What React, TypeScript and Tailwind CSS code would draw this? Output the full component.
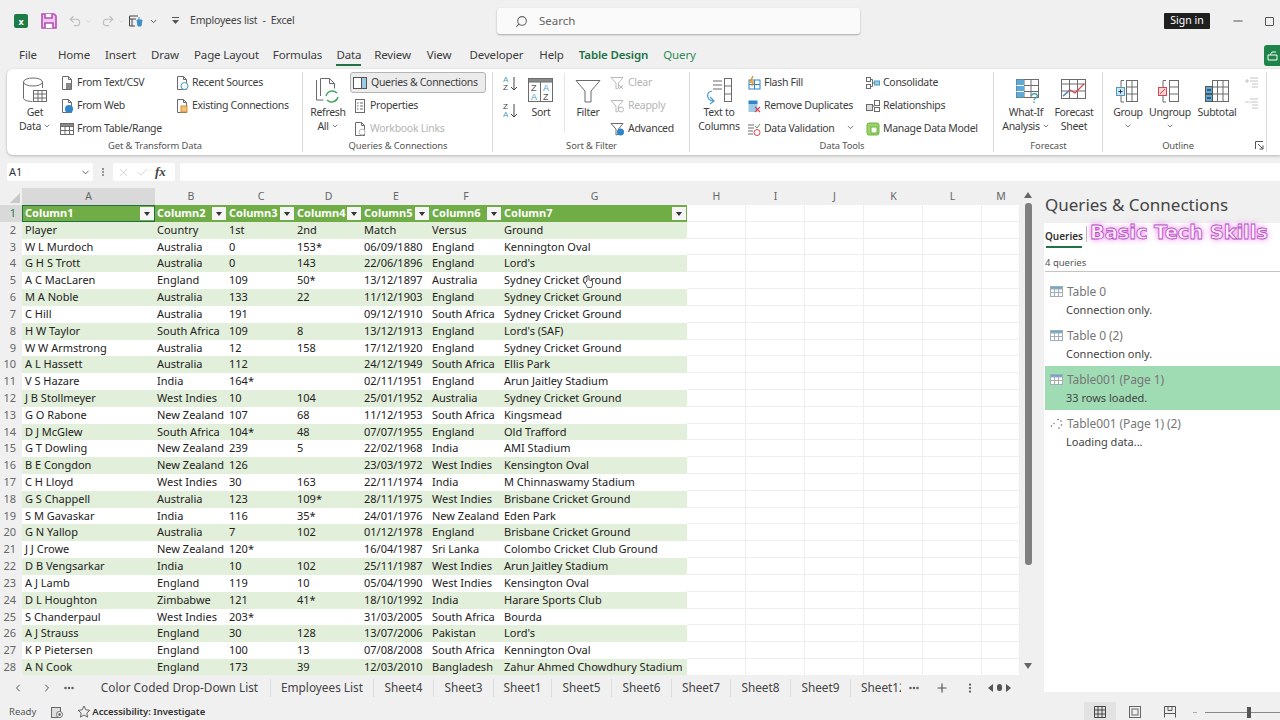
import type { ReactNode } from "react";
import { ChevronDown, ChevronLeft, ChevronRight, Check, MoreHorizontal, MoreVertical, Plus, Search, Undo2, Redo2, X, Minus } from "lucide-react";

const TEAL = "#4a9cc7";
const GR = "#6b6b6b";

const rows = [
  ["Player", "Country", "1st", "2nd", "Match", "Versus", "Ground"],
  ["W L Murdoch", "Australia", "0", "153*", "06/09/1880", "England", "Kennington Oval"],
  ["G H S Trott", "Australia", "0", "143", "22/06/1896", "England", "Lord's"],
  ["A C MacLaren", "England", "109", "50*", "13/12/1897", "Australia", "Sydney Cricket Ground"],
  ["M A Noble", "Australia", "133", "22", "11/12/1903", "England", "Sydney Cricket Ground"],
  ["C Hill", "Australia", "191", "", "09/12/1910", "South Africa", "Sydney Cricket Ground"],
  ["H W Taylor", "South Africa", "109", "8", "13/12/1913", "England", "Lord's (SAF)"],
  ["W W Armstrong", "Australia", "12", "158", "17/12/1920", "England", "Sydney Cricket Ground"],
  ["A L Hassett", "Australia", "112", "", "24/12/1949", "South Africa", "Ellis Park"],
  ["V S Hazare", "India", "164*", "", "02/11/1951", "England", "Arun Jaitley Stadium"],
  ["J B Stollmeyer", "West Indies", "10", "104", "25/01/1952", "Australia", "Sydney Cricket Ground"],
  ["G O Rabone", "New Zealand", "107", "68", "11/12/1953", "South Africa", "Kingsmead"],
  ["D J McGlew", "South Africa", "104*", "48", "07/07/1955", "England", "Old Trafford"],
  ["G T Dowling", "New Zealand", "239", "5", "22/02/1968", "India", "AMI Stadium"],
  ["B E Congdon", "New Zealand", "126", "", "23/03/1972", "West Indies", "Kensington Oval"],
  ["C H Lloyd", "West Indies", "30", "163", "22/11/1974", "India", "M Chinnaswamy Stadium"],
  ["G S Chappell", "Australia", "123", "109*", "28/11/1975", "West Indies", "Brisbane Cricket Ground"],
  ["S M Gavaskar", "India", "116", "35*", "24/01/1976", "New Zealand", "Eden Park"],
  ["G N Yallop", "Australia", "7", "102", "01/12/1978", "England", "Brisbane Cricket Ground"],
  ["J J Crowe", "New Zealand", "120*", "", "16/04/1987", "Sri Lanka", "Colombo Cricket Club Ground"],
  ["D B Vengsarkar", "India", "10", "102", "25/11/1987", "West Indies", "Arun Jaitley Stadium"],
  ["A J Lamb", "England", "119", "10", "05/04/1990", "West Indies", "Kensington Oval"],
  ["D L Houghton", "Zimbabwe", "121", "41*", "18/10/1992", "India", "Harare Sports Club"],
  ["S Chanderpaul", "West Indies", "203*", "", "31/03/2005", "South Africa", "Bourda"],
  ["A J Strauss", "England", "30", "128", "13/07/2006", "Pakistan", "Lord's"],
  ["K P Pietersen", "England", "100", "13", "07/08/2008", "South Africa", "Kennington Oval"],
  ["A N Cook", "England", "173", "39", "12/03/2010", "Bangladesh", "Zahur Ahmed Chowdhury Stadium"],
];

const gridCols = "grid grid-cols-[22px_133px_72px_68px_67px_68px_72px_185px_59px_59px_59px_59px_59px_38px]";
const letters = ["A", "B", "C", "D", "E", "F", "G", "H", "I", "J", "K", "L", "M"];

const Ico = ({ w = 14, h = 14, children }: { w?: number; h?: number; children: ReactNode }) => (
  <svg width={w} height={h} viewBox={`0 0 ${w} ${h}`} fill="none" stroke={GR} strokeWidth="1" className="shrink-0">
    {children}
  </svg>
);

const Doc = ({ children }: { children?: ReactNode }) => (
  <Ico>
    <path d="M2.500 13.500V.5h6l3 3v10z" fill="#fff" />
    <path d="M8.500.5v3h3" />
    {children}
  </Ico>
);

const TableIco = ({ color = GR }: { color?: string }) => (
  <Ico>
    <rect x=".5" y="1.500" width="13" height="11" fill="#fff" stroke={color} />
    <path d="M.5 8.500h13M5 4.500v8M9.500 4.500v8" stroke={color} />
    <rect x=".5" y="1.500" width="13" height="3" fill="#8a8a8a" stroke={color} />
  </Ico>
);

const Small = ({ icon, label, disabled }: { icon: ReactNode; label: string; disabled?: boolean }) => (
  <div className={`flex h-[22.7px] items-center gap-[3px] whitespace-nowrap ${disabled ? "text-[#b5b5b5]" : "text-[#3d3d3d]"}`}>
    {icon}
    <span>{label}</span>
  </div>
);

const Big = ({ icon, lines, w, ml, caret }: { icon: ReactNode; lines: string[]; w: string; ml: string; caret?: boolean }) => (
  <div className={`flex shrink-0 flex-col items-center text-[#3d3d3d] ${w} ${ml}`}>
    <div className="flex h-[34px] items-end justify-center">{icon}</div>
    {lines.map((l, i) => (
      <div key={l} className="flex h-[14px] items-center gap-[2px] whitespace-nowrap leading-[14px]">
        {l}
        {caret && i === lines.length - 1 && <ChevronDown size={8} strokeWidth={2} />}
      </div>
    ))}
  </div>
);

const Group = ({ label, w, children, labelPad }: { label: string; w: string; children: ReactNode; labelPad?: string }) => (
  <div className={`relative flex h-full shrink-0 flex-col ${w}`}>
    <div className="flex h-[68px] pt-[2px]">{children}</div>
    <div className={`mt-[2px] text-center text-[9.4px] leading-[14px] tracking-[-0.1px] text-[#555] ${labelPad ?? ""}`}>{label}</div>
    <div className="absolute right-0 top-[3px] h-[80px] w-px bg-[#dcdcdc]" />
  </div>
);

const Ribbon = () => (
  <div className="ml-[7px] flex h-[86px] rounded-l-[6px] bg-white text-[10.5px] tracking-[-0.3px] shadow-[0_1px_3px_rgba(0,0,0,0.25)]">
    <Group label="Get & Transform Data" w="w-[296px]">
      <Big
        w="w-[36px]"
        ml="ml-[10px]"
        caret
        lines={["Get", "Data"]}
        icon={
          <Ico w={26} h={28}>
            <ellipse cx="11" cy="5" rx="9.500" ry="4" fill="#fff" />
            <path d="M1.500 5v16c0 2 4 3.500 9 3.500M20.500 5v6" />
            <rect x="11.500" y="13.500" width="13" height="11" fill="#fff" />
            <path d="M11.500 17h13M11.500 21h13M16 13.500v11M20 13.500v11" />
          </Ico>
        }
      />
      <div className="ml-[7px] mt-px w-[115px]">
        <Small label="From Text/CSV" icon={<Doc><rect x="6" y="7" width="5" height="6" fill="#8a8a8a" stroke="none" /></Doc>} />
        <Small label="From Web" icon={<Doc><circle cx="9" cy="10" r="4" fill="#2f86c6" stroke="none" /></Doc>} />
        <Small label="From Table/Range" icon={<TableIco />} />
      </div>
      <div className="mt-px w-[110px]">
        <Small label="Recent Sources" icon={<Doc><circle cx="9.500" cy="10" r="3.500" fill="#fff" stroke={TEAL} /></Doc>} />
        <Small label="Existing Connections" icon={<Doc><rect x="6" y="7" width="6" height="6" fill="#f3c27a" stroke="#d48a2a" /></Doc>} />
      </div>
    </Group>
    <Group label="Queries & Connections" w="w-[190px]">
      <Big
        w="w-[40px]"
        ml="ml-[5px]"
        caret
        lines={["Refresh", "All"]}
        icon={
          <Ico w={26} h={28}>
            <path d="M1.500 3v20h7" />
            <path d="M5.500 19V1.500h9l5 5v5" fill="#fff" />
            <path d="M14.500 1.500v5h5" />
            <path d="M11 19a6.500 6.500 0 0 1 11-3M23 20a6.500 6.500 0 0 1-11 3" stroke="#4aa564" strokeWidth="1.400" />
          </Ico>
        }
      />
      <div className="ml-[2px] mt-px w-[136px]">
        <div className="flex h-[21px] items-center gap-[4px] rounded-[3px] border border-[#b4b4b4] bg-[#ececec] pl-[2px] text-[#3d3d3d]">
          <Ico>
            <rect x=".5" y="1.500" width="13" height="11" fill="#fff" stroke="#555" />
            <rect x="8.500" y="1.500" width="5" height="11" fill="#9bcbe6" stroke="#555" />
          </Ico>
          <span className="whitespace-nowrap">Queries & Connections</span>
        </div>
        <div className="ml-[3px] mt-[2px]">
          <Small label="Properties" icon={<Ico><rect x="2.500" y=".5" width="9" height="13" fill="#fff" /><path d="M4 4h1.500M7 4h3M4 7h1.500M7 7h3M4 10h1.500M7 10h3" /></Ico>} />
          <Small label="Workbook Links" disabled icon={<Doc><circle cx="9" cy="10" r="3" fill="#fff" stroke="#bbb" /></Doc>} />
        </div>
      </div>
    </Group>
    <Group label="Sort & Filter" w="w-[197px]">
      <div className="ml-[10px] w-[15px] shrink-0 text-[#3d3d3d]">
        <svg width="16" height="22" viewBox="0 0 16 22" className="mt-[3px]">
          <text x="0" y="8" fontSize="8" fill={TEAL} fontFamily="Liberation Sans">A</text>
          <text x="0" y="16" fontSize="8" fill="#444" fontFamily="Liberation Sans">Z</text>
          <path d="M11 3v13M8 13l3 3 3-3" stroke="#444" fill="none" />
        </svg>
        <svg width="16" height="22" viewBox="0 0 16 22" className="mt-[5px]">
          <text x="0" y="8" fontSize="8" fill="#444" fontFamily="Liberation Sans">Z</text>
          <text x="0" y="16" fontSize="8" fill={TEAL} fontFamily="Liberation Sans">A</text>
          <path d="M11 3v13M8 13l3 3 3-3" stroke="#444" fill="none" />
        </svg>
      </div>
      <Big
        w="w-[30px]"
        ml="ml-[8px]"
        lines={["Sort"]}
        icon={
          <Ico w={26} h={28}>
            <rect x=".5" y="1.500" width="24" height="23" fill="#fff" />
            <rect x=".5" y="1.500" width="24" height="3.500" fill="#8a8a8a" />
            <path d="M12.500 5v19.500" />
            <text x="3" y="14" fontSize="9" fill="#555" stroke="none" fontFamily="Liberation Sans">Z</text>
            <text x="3" y="23" fontSize="9" fill={TEAL} stroke="none" fontFamily="Liberation Sans">A</text>
            <text x="15" y="14" fontSize="9" fill={TEAL} stroke="none" fontFamily="Liberation Sans">A</text>
            <text x="15" y="23" fontSize="9" fill="#555" stroke="none" fontFamily="Liberation Sans">Z</text>
          </Ico>
        }
      />
      <div className="ml-[8px] mt-[2px] h-[60px] w-px shrink-0 bg-[#e4e4e4]" />
      <Big
        w="w-[32px]"
        ml="ml-[7px]"
        lines={["Filter"]}
        icon={
          <Ico w={26} h={28}>
            <path d="M1 3.500h24L16 14v11h-6V14z" fill="#fff" />
          </Ico>
        }
      />
      <div className="ml-[6px] mt-px">
        <Small label="Clear" disabled icon={<Ico w={15}><path d="M1 1.500h12L8.500 7v5l-2.500 1V7z" stroke="#bbb" /><path d="M9 9l4 4M13 9l-4 4" stroke="#bbb" /></Ico>} />
        <Small label="Reapply" disabled icon={<Ico w={15}><path d="M1 1.500h12L8.500 7v5l-2.500 1V7z" stroke="#bbb" /><circle cx="11" cy="10.500" r="2.500" stroke="#bbb" /></Ico>} />
        <Small label="Advanced" icon={<Ico w={15}><path d="M1 1.500h12L8.500 7v5l-2.500 1V7z" /><circle cx="10.500" cy="10" r="3.500" fill="#2f86c6" stroke="none" /></Ico>} />
      </div>
    </Group>
    <Group label="Data Tools" w="w-[304px]">
      <Big
        w="w-[44px]"
        ml="ml-[7px]"
        lines={["Text to", "Columns"]}
        icon={
          <Ico w={30} h={28}>
            <path d="M9 4h9M9 8h9M9 12h9" />
            <rect x="20.500" y="1.500" width="7" height="23" fill="#fff" />
            <path d="M20.500 9h7M20.500 17h7" />
            <path d="M8 14c-6 1-6 9 1 10M6 20l4 4-4 3" stroke={TEAL} strokeWidth="1.200" />
          </Ico>
        }
      />
      <div className="ml-[6px] mt-px w-[119px] shrink-0">
        <Small label="Flash Fill" icon={<Ico><rect x="2" y="4" width="11" height="9" stroke="#2f86c6" fill="#fff" /><path d="M2 8.500h11M7.500 4v9" stroke="#2f86c6" /><path d="M6 0L3 6h3l-1 4" stroke="#e8952c" strokeWidth="1.500" /></Ico>} />
        <Small label="Remove Duplicates" icon={<Ico><rect x="1.500" y="1.500" width="9" height="3.500" fill="#2f86c6" stroke="none" /><rect x="1.500" y="5" width="9" height="8" fill="#9bcbe6" stroke="none" /><path d="M8 8l5 5M13 8l-5 5" stroke="#d9434e" strokeWidth="1.200" /></Ico>} />
        <Small label="Data Validation" icon={<Ico><path d="M1 3h6M1 6h6M1 9h5M1 12h5" /><path d="M8 4l2 2 3-4" stroke="#5a9e5a" /><circle cx="10" cy="10.500" r="3" stroke="#d9434e" /></Ico>} />
      </div>
      <div className="mt-px w-[115px] shrink-0">
        <Small label="Consolidate" icon={<Ico><rect x=".5" y="1.500" width="4" height="4" /><rect x=".5" y="8.500" width="4" height="4" /><path d="M4.500 3.500h2v7h-2M6.500 7h2" /><rect x="8.500" y="5" width="5" height="4" fill="#9bcbe6" stroke={TEAL} /></Ico>} />
        <Small label="Relationships" icon={<Ico><rect x=".5" y="5.500" width="6" height="6" fill="#ddd" /><rect x="8.500" y="1.500" width="5" height="5" /><rect x="8.500" y="8.500" width="5" height="4" /><path d="M6.500 7h2" /></Ico>} />
        <Small label="Manage Data Model" icon={<Ico><rect x="1" y="1" width="12" height="12" rx="2" fill="#9bd46a" stroke="#6cb33f" /><rect x="5" y="5" width="6" height="6" fill="#fff" stroke="#6cb33f" /></Ico>} />
      </div>
      <ChevronDown size={9} strokeWidth={2} className="absolute left-[156px] top-[54px] text-[#444]" />
    </Group>
    <Group label="Forecast" w="w-[109px]">
      <Big
        w="w-[48px]"
        ml="ml-[8px]"
        caret
        lines={["What-If", "Analysis"]}
        icon={
          <Ico w={30} h={28}>
            <rect x="5.500" y="2.500" width="22" height="18" fill="#fff" />
            <path d="M13 2.500v18M20 2.500v18M5.500 8.500h22M5.500 14.500h22" />
            <rect x="5.500" y="2.500" width="7.500" height="18" fill="#5da9d8" stroke="none" />
            <path d="M13 8.500H5.500M13 14.500H5.500" stroke="#fff" />
            <text x="19" y="26" fontSize="15" fill="#3f9ea8" stroke="none" fontFamily="Liberation Sans">?</text>
          </Ico>
        }
      />
      <Big
        w="w-[44px]"
        ml="ml-[2px]"
        lines={["Forecast", "Sheet"]}
        icon={
          <Ico w={26} h={28}>
            <rect x=".5" y="2.500" width="24" height="19" fill="#fff" />
            <path d="M.5 7h24M8.500 2.500v19M16.500 2.500v19M.5 14h24" />
            <path d="M2 19l7-6 5 3 9-9" stroke="#d9434e" strokeWidth="1.200" />
            <path d="M2 19l6-5" stroke={TEAL} strokeWidth="1.400" />
          </Ico>
        }
      />
    </Group>
    <Group label="Outline" w="w-[164px]" labelPad="pr-[14px]">
      <Big
        w="w-[30px]"
        ml="ml-[10px]"
        caret
        lines={["Group", ""]}
        icon={
          <Ico w={24} h={28}>
            <path d="M8 3.500H5V10M5 19v6h3" />
            <rect x="10.500" y="3.500" width="11" height="21" fill="#fff" />
            <path d="M10.500 10h11M10.500 17h11M16 3.500v21" />
            <rect x=".5" y="10.500" width="8" height="8" fill="#cde4f2" stroke={TEAL} />
            <path d="M2.500 14.500h4M4.500 12.500v4" stroke="#333" />
          </Ico>
        }
      />
      <Big
        w="w-[44px]"
        ml="ml-[5px]"
        caret
        lines={["Ungroup", ""]}
        icon={
          <Ico w={24} h={28}>
            <path d="M8 3.500H5V10M5 19v6h3" />
            <rect x="11.500" y="3.500" width="9" height="21" fill="#fff" />
            <path d="M11.500 10h9M11.500 17h9" />
            <rect x=".5" y="10.500" width="8" height="8" fill="#f6d5d8" stroke="#d9434e" />
            <path d="M2 17l5-5" stroke="#d9434e" />
          </Ico>
        }
      />
      <Big
        w="w-[44px]"
        ml="ml-[3px]"
        lines={["Subtotal"]}
        icon={
          <Ico w={26} h={28}>
            <rect x="8.500" y="3.500" width="16" height="21" fill="#fff" />
            <path d="M8.500 10h16M8.500 17h16M13.500 3.500v21M19 3.500v21" />
            <rect x="1.500" y="9.500" width="7" height="7" fill="#5da9d8" stroke="#555" />
            <rect x="1.500" y="17.500" width="7" height="7" fill="#5da9d8" stroke="#555" />
            <path d="M3 13h4M3 21h4" stroke="#111" />
          </Ico>
        }
      />
      <div className="ml-[6px] mt-[4px] flex flex-col gap-[7px]">
        <Ico w={14} h={14}><path d="M5 3h8M5 6h8M7 9h6M7 12h6" stroke="#c4c4c4" /><path d="M0 6h4M2 4v4" stroke="#c4c4c4" /></Ico>
        <Ico w={14} h={14}><path d="M5 3h8M5 6h8M7 9h6M7 12h6" stroke="#c4c4c4" /><path d="M0 6h4" stroke="#c4c4c4" /></Ico>
      </div>
      <svg width="9" height="9" viewBox="0 0 9 9" className="absolute bottom-[5px] left-[152px]" fill="none" stroke="#555">
        <path d="M.5 8V.5H8M3 3l5 5M8 4.500V8H4.500" />
      </svg>
    </Group>
  </div>
);

const tabs = ["File", "Home", "Insert", "Draw", "Page Layout", "Formulas", "Data", "Review", "View", "Developer", "Help", "Table Design", "Query"];
const tabWidths = ["w-[44px]", "w-[48px]", "w-[45px]", "w-[44px]", "w-[79px]", "w-[63px]", "w-[40px]", "w-[47px]", "w-[46px]", "w-[69px]", "w-[41px]", "w-[83px]", "w-[49px]"];
const sheets: [string, string][] = [
  ["Color Coded Drop-Down List", "w-[182px]"],
  ["Employees List", "w-[103px]"],
  ["Sheet4", "w-[60px]"],
  ["Sheet3", "w-[60px]"],
  ["Sheet1", "w-[58px]"],
  ["Sheet5", "w-[60px]"],
  ["Sheet6", "w-[60px]"],
  ["Sheet7", "w-[59px]"],
  ["Sheet8", "w-[60px]"],
  ["Sheet9", "w-[60px]"],
];

const Query = ({ name, sub, selected, loading }: { name: string; sub: string; selected?: boolean; loading?: boolean }) => (
  <div className={`h-[44px] pl-[5px] pt-[4px] ${selected ? "bg-[#9fdcb4]" : ""}`}>
    <div className="flex h-[19px] items-center gap-[4px] text-[12px] tracking-[-0.1px] text-[#777]">
      {loading ? (
        <svg width="13" height="13" viewBox="0 0 13 13" className="shrink-0" fill="#666">
          <circle cx="1.500" cy="9" r=".8" />
          <circle cx="4" cy="6.500" r=".7" />
          <circle cx="8" cy="2.500" r=".8" />
          <circle cx="11" cy="4" r=".8" />
          <circle cx="11.500" cy="8" r=".8" />
          <circle cx="9" cy="11" r=".8" />
        </svg>
      ) : (
        <svg width="13" height="13" viewBox="0 0 13 13" className="shrink-0" fill="none" stroke="#a3adb5">
          <rect x=".5" y="1.500" width="12" height="10" fill="#fff" />
          <rect x=".5" y="1.500" width="12" height="2.500" fill="#6aa9cf" />
          <path d="M4.500 4v7.500M8.500 4v7.500M.5 7.500h12" />
        </svg>
      )}
      <span className="whitespace-nowrap">{name}</span>
    </div>
    <div className="pl-[16px] text-[11px] leading-[18px] text-[#444]">{sub}</div>
  </div>
);

export default function App() {
  return (
    <div className="flex h-[720px] w-[1280px] flex-col overflow-hidden bg-[#f0f0f0] font-['Noto_Sans',sans-serif]">
      {/* Title bar */}
      <div className="flex h-[41px] items-center pt-[1px]">
        <div className="ml-[14px] flex h-[14px] w-[14px] items-center justify-center rounded-[2px] bg-[#1d7c46] text-[9px] font-bold leading-none text-white">x</div>
        <svg width="16" height="16" viewBox="0 0 16 16" className="ml-[13px]" fill="#f2c8f0" stroke="#b24fb4" strokeWidth="1.600">
          <path d="M1 1h12l2 2v12H1z" />
          <path d="M4 1v4h7V1M4 15v-5h8v5" fill="#fff" />
        </svg>
        <Undo2 size={14} className="ml-[11px] text-[#bdbdbd]" />
        <ChevronDown size={7} className="ml-[3px] text-[#c8c8c8]" />
        <Redo2 size={14} className="ml-[9px] text-[#bdbdbd]" />
        <ChevronDown size={7} className="ml-[3px] text-[#c8c8c8]" />
        <svg width="16" height="15" viewBox="0 0 16 15" className="ml-[3px]" fill="none" stroke="#444">
          <path d="M10 2H1.500v10H7M1.500 5H8M4 5v7" />
          <path d="M11 3v7M9 6h5l-1 6H10z" fill="#3b8fc4" stroke="#3b8fc4" />
        </svg>
        <ChevronDown size={9} strokeWidth={2.500} className="ml-[5px] text-[#444]" />
        <svg width="9" height="8" viewBox="0 0 9 8" className="ml-[13px]" fill="#555">
          <path d="M1 0h7v1H1zM1 3h7L4.500 7z" />
        </svg>
        <div className="ml-[10px] w-[307px] text-[10.5px] tracking-[-0.2px] text-[#444]">Employees list&nbsp; -&nbsp; Excel</div>
        <div className="flex h-[26px] w-[363px] items-center rounded-[3px] bg-[#fafafa] pl-[18px] text-[11.5px] text-[#666] shadow-[0_1px_2px_rgba(0,0,0,0.3)]">
          <Search size={13} className="-scale-x-100 text-[#666]" />
          <span className="ml-[11px]">Search</span>
        </div>
        <div className="ml-[304px] flex h-[16px] w-[46px] items-center justify-center rounded-[1px] bg-[#1f1f1f] text-[10.5px] text-white">Sign in</div>
        <Minus size={14} className="ml-[21px] text-[#555]" />
        <div className="ml-[20px] h-[9px] w-[9px] rounded-[1px] border border-[#555]" />
      </div>

      {/* Ribbon tabs */}
      <div className="flex h-[28px] items-center pl-[6px] text-[11.5px] tracking-[-0.15px] text-[#3d3d3d]">
        {tabs.map((t, i) => (
          <div
            key={t}
            className={`relative flex h-full shrink-0 items-center justify-center whitespace-nowrap ${tabWidths[i]} ${t === "Table Design" ? "font-semibold text-[#217346]" : ""} ${t === "Query" ? "text-[#2e8b57]" : ""}`}
          >
            {t}
            {t === "Data" && <div className="absolute bottom-[3px] left-[7px] h-[2px] w-[25px] bg-[#217346]" />}
          </div>
        ))}
        <div className="ml-auto flex h-[21px] w-[16px] items-center justify-center rounded-l-[3px] bg-[#1e8449]">
          <svg width="11" height="11" viewBox="0 0 11 11" fill="none" stroke="#fff"><path d="M1 10V5h9v5zM3 5l2-3h4" /></svg>
        </div>
      </div>

      <Ribbon />

      {/* Formula bar */}
      <div className="mt-[8px] flex h-[18px] items-center text-[11px]">
        <div className="ml-[7px] flex h-full w-[86px] items-center justify-between rounded-[2px] bg-white pl-[2px] pr-[2px] text-[#333]">
          A1
          <ChevronDown size={11} className="text-[#555]" />
        </div>
        <MoreVertical size={10} strokeWidth={3} className="ml-[5px] text-[#777]" />
        <div className="ml-[5px] flex h-full w-[62px] items-center gap-[6px] rounded-[2px] bg-white pl-[4px]">
          <X size={13} strokeWidth={1} className="text-[#b5b5b5]" />
          <Check size={13} strokeWidth={1} className="text-[#b5b5b5]" />
          <span className="font-['Liberation_Serif',serif] text-[13px] font-bold italic text-[#444]">fx</span>
        </div>
        <div className="ml-[5px] h-full flex-1 bg-white" />
      </div>

      {/* Sheet + pane */}
      <div className="mt-[7px] flex h-[512px]">
        <div className="flex w-[1036px] flex-col">
          <div className="flex h-[487px]">
            <div className="relative w-[1020px] overflow-hidden bg-white text-[11px] leading-[16.82px] text-[#222]">
              <div className={`${gridCols} h-[17px] bg-[#f0f0f0] text-center text-[10.5px] text-[#666]`}>
                <div className="relative">
                  <div className="absolute bottom-[2px] right-[2px] h-0 w-0 border-b-[10px] border-l-[10px] border-b-[#c8c8c8] border-l-transparent" />
                </div>
                {letters.map((l, i) => (
                  <div key={l} className={`leading-[16px] ${i === 0 ? "bg-[#d9d9d9]" : ""}`}>{l}</div>
                ))}
              </div>
              <div className={`${gridCols} h-[16.82px] bg-white`}>
                <div className="bg-[#d9d9d9] pr-[6px] text-right text-[#2a7a4b]">1</div>
                {["Column1", "Column2", "Column3", "Column4", "Column5", "Column6", "Column7"].map((c, i) => (
                  <div key={c} className={`relative bg-[#70ad47] font-bold text-white ${i === 0 ? "pl-[3px] outline-[1.5px] -outline-offset-1 outline-[#1e6f41]" : "pl-[2px]"}`}>
                    {c}
                    <div className="absolute right-[1px] top-[2px] flex h-[13px] w-[14px] items-center justify-center bg-[#f5f5f5]">
                      <div className="h-0 w-0 border-x-[3.5px] border-t-[4px] border-x-transparent border-t-[#333]" />
                    </div>
                  </div>
                ))}
                {[0, 1, 2, 3, 4, 5].map((k) => (
                  <div key={k} className="border-b border-r border-[#eeeeee]" />
                ))}
              </div>
              {rows.map((r, idx) => (
                <div key={idx} className={`${gridCols} h-[16.82px]`}>
                  <div className="bg-[#f0f0f0] pr-[6px] text-right text-[#666]">{idx + 2}</div>
                  {r.map((c, i) => (
                    <div key={i} className={`whitespace-nowrap ${i === 0 ? "pl-[3px]" : "pl-[2px]"} ${idx % 2 === 0 ? "bg-[#e2efda]" : "bg-white"}`}>{c}</div>
                  ))}
                  {[0, 1, 2, 3, 4, 5].map((k) => (
                    <div key={k} className="border-b border-r border-[#eeeeee]" />
                  ))}
                </div>
              ))}
              {/* mouse pointer */}
              <svg width="10" height="13" viewBox="0 0 10 13" className="absolute left-[584px] top-[87px]" fill="#fff" stroke="#333" strokeWidth=".8">
                <path d="M3 6V1.500a1 1 0 0 1 2 0V5l3.500 1V10l-1 2.500H3.500L1 8z" />
              </svg>
            </div>
            <div className="relative w-[16px] bg-[#f0f0f0]">
              <div className="absolute left-[4px] top-[4px] h-0 w-0 border-x-[4px] border-b-[6px] border-x-transparent border-b-[#666]" />
              <div className="absolute left-[5px] top-[15px] h-[362px] w-[7px] rounded-[3px] bg-[#808080]" />
              <div className="absolute bottom-[6px] left-[4px] h-0 w-0 border-x-[4px] border-t-[6px] border-x-transparent border-t-[#666]" />
            </div>
          </div>

          {/* Sheet tabs */}
          <div className="flex h-[25px] items-center text-[11.8px] text-[#444]">
            <ChevronLeft size={12} className="ml-[12px] text-[#555]" />
            <ChevronRight size={12} className="ml-[17px] text-[#555]" />
            <MoreHorizontal size={12} strokeWidth={3} className="ml-[10px] text-[#555]" />
            <div className="ml-[14px] flex h-[18px] items-center">
              {sheets.map(([s, w]) => (
                <div key={s} className={`flex h-full shrink-0 items-center justify-center whitespace-nowrap border-r border-[#dcdcdc] ${w}`}>{s}</div>
              ))}
              <div className="w-[50px] overflow-hidden whitespace-nowrap pl-[10px]">Sheet12</div>
            </div>
            <MoreHorizontal size={12} strokeWidth={3} className="ml-[7px] text-[#555]" />
            <Plus size={14} className="ml-[15px] text-[#555]" />
            <MoreVertical size={12} strokeWidth={2.500} className="ml-[15px] text-[#555]" />
            <div className="ml-[12px] flex items-center gap-[4px]">
              <div className="h-0 w-0 border-y-[4px] border-r-[5px] border-y-transparent border-r-[#555]" />
              <div className="h-[7px] w-[5px] rounded-full bg-[#555]" />
              <div className="h-0 w-0 border-y-[4px] border-l-[5px] border-y-transparent border-l-[#555]" />
            </div>
          </div>
        </div>

        {/* Queries pane */}
        <div className="ml-[8px] flex h-[504px] w-[236px] flex-col">
          <div className="h-[35px] pl-px text-[17px] leading-[34px] text-[#444]">Queries & Connections</div>
          <div className="relative flex-1 bg-white pl-px">
            <div className="relative h-[25px] text-[10px] font-semibold leading-[26px] text-[#333]">
              Queries
              <div className="absolute bottom-0 left-px h-[2px] w-[36px] bg-[#217346]" />
            </div>
            <div className="mt-[6px] h-[18px] border-b border-[#c4c4c4] text-[9.5px] leading-[17px] text-[#555]">4 queries</div>
            <div className="mt-[6px]">
              <Query name="Table 0" sub="Connection only." />
              <Query name="Table 0 (2)" sub="Connection only." />
              <Query name="Table001 (Page 1)" sub="33 rows loaded." selected />
              <Query name="Table001 (Page 1) (2)" sub="Loading data..." loading />
            </div>
            <div className="absolute left-[42px] top-[3px] h-[16px] w-px bg-[#bbb]" />
            <div className="absolute left-[46px] top-[-5px] whitespace-nowrap font-['DejaVu_Sans',sans-serif] text-[19.5px] font-bold tracking-[-0.1px] text-[#ffeefb] [-webkit-text-stroke:0.8px_#b54cc4] [text-shadow:0_0_6px_#e45ce4]">
              Basic Tech Skills
            </div>
          </div>
        </div>
      </div>

      {/* Status bar */}
      <div className="flex h-[20px] items-center pl-[9px] pt-[4px] text-[9.5px] text-[#555]">
        Ready
        <svg width="13" height="13" viewBox="0 0 13 13" className="ml-[15px]" fill="none" stroke="#666">
          <rect x=".5" y="1.500" width="9" height="10" fill="#ddd" />
          <circle cx="8.500" cy="8.500" r="3" fill="#fff" />
          <circle cx="8.500" cy="8.500" r="1" fill="#666" />
        </svg>
        <svg width="14" height="14" viewBox="0 0 14 14" className="ml-[13px]" fill="none" stroke="#666">
          <path d="M7 1l1.800 3.800 4 .5-3 2.800.8 4L7 10l-3.600 2.100.8-4-3-2.800 4-.5z" />
        </svg>
        <span className="ml-[1px] font-semibold tracking-[-0.05px] text-[#333]">Accessibility: Investigate</span>
        <div className="ml-auto flex h-[20px] items-center">
          <div className="flex h-full w-[32px] items-center justify-center bg-[#e2e2e2]">
            <svg width="12" height="12" viewBox="0 0 12 12" fill="none" stroke="#444"><path d="M.5.5h11v11H.5zM4 .5v11M8 .5v11M.5 4h11M.5 8h11" /></svg>
          </div>
          <svg width="12" height="12" viewBox="0 0 12 12" className="ml-[13px]" fill="none" stroke="#666"><rect x=".5" y=".5" width="11" height="11" /><rect x="3" y="3" width="6" height="6" /></svg>
          <svg width="12" height="12" viewBox="0 0 12 12" className="ml-[23px]" fill="none" stroke="#555"><path d="M.5.5h11v7h-11zM.5 7.500v4M11.500 7.500v4M4 .5v4h4v-4" /></svg>
          <div className="ml-[17px] h-px w-[4px] bg-[#aaa]" />
          <div className="relative ml-[8px] h-px w-[75px] bg-[#888]">
            <div className="absolute left-[42px] top-[-5px] h-[11px] w-[4px] bg-[#555]" />
          </div>
        </div>
      </div>
    </div>
  );
}
